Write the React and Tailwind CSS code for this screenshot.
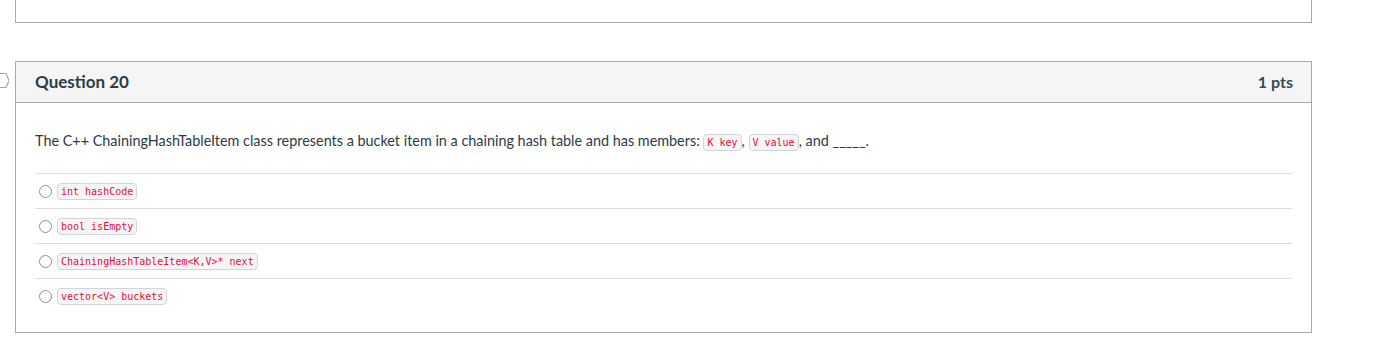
import React from 'react';

const Code = ({ children }) => (
  <code className="inline-block h-[17px] px-[3px] rounded-[4px] border border-[#d1d5db] bg-[#f5f5f5] text-[#e0103a] text-[10px] leading-[15px] font-['DejaVu_Sans_Mono',monospace] align-middle">
    {children}
  </code>
);

const answers = [
  'int hashCode',
  'bool isEmpty',
  'ChainingHashTableItem<K,V>* next',
  'vector<V> buckets',
];

export default function App() {
  return (
    <div className="w-[1379px] h-[353px] bg-white font-['Lato',sans-serif] text-[#2d3b45] overflow-hidden">
      {/* previous question (tail) */}
      <div className="ml-[15px] w-[1297px] h-[23px] border-x border-b border-[#aaaaaa]" />

      <div className="relative mt-[38px] ml-[15px] w-[1297px] border border-[#aaaaaa]">
        {/* bookmark flag, clipped at page edge */}
        <svg className="absolute left-[-25px] top-[10px]" width="18" height="17" viewBox="0 0 18 17">
          <path d="M1 1.5 H15 L18 8.5 L15 15.5 H1 Z" fill="none" stroke="#9aa7b3" strokeWidth="1.2" />
        </svg>

        <div className="h-[41px] bg-[#f5f5f5] border-b border-[#aaaaaa] flex items-center justify-between pl-[19px] pr-[18px]">
          <h2 className="text-[17px] font-bold leading-none mt-[-1px]">Question 20</h2>
          <span className="text-[16px] font-bold leading-none mt-[-1px] text-[#3a4a56]">1 pts</span>
        </div>

        <div className="px-[19px] pt-[28px] pb-[18px]">
          <p className="text-[14.4px] leading-[20px] mb-[22px]">
            The C++ ChainingHashTableItem class represents a bucket item in a chaining hash table and has members:{' '}
            <Code>K key</Code>, <Code>V value</Code>, and _____.
          </p>

          <div className="border-t border-[#dddddd]">
            {answers.map((a, i) => (
              <div
                key={a}
                className={`flex items-center h-[35px] ${i < answers.length - 1 ? 'border-b border-[#dddddd]' : ''}`}
              >
                <span className="ml-[4px] w-[13px] h-[13px] rounded-full border border-[#8f8f8f] bg-white" />
                <span className="ml-[5px] flex">
                  <Code>{a}</Code>
                </span>
              </div>
            ))}
          </div>
        </div>
      </div>
    </div>
  );
}
